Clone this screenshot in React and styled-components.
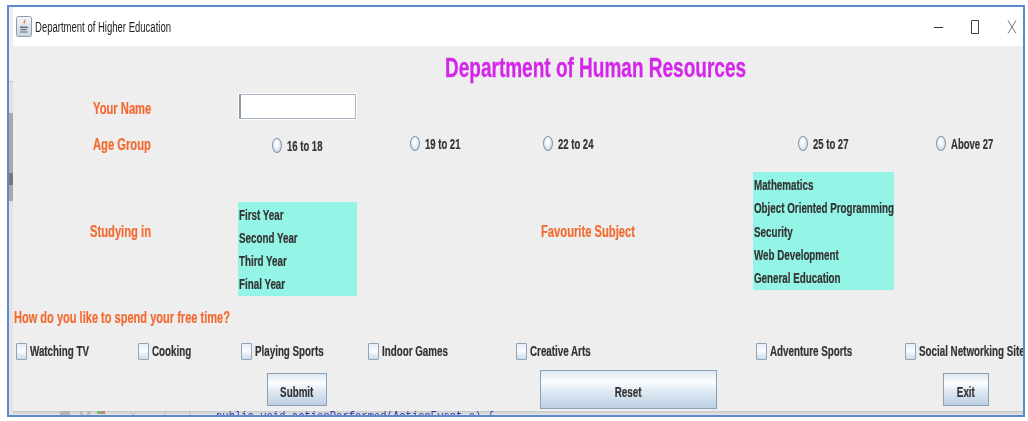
import React from "react";
import styled, { createGlobalStyle } from "styled-components";

const Global = createGlobalStyle`
  html, body { margin: 0; padding: 0; background: #fff; }
  body { font-family: "Liberation Sans", Arial, sans-serif; }
`;

const Page = styled.div`
  width: 1028px;
  height: 421px;
  padding: 5px 0 0 7px;
  box-sizing: border-box;
  overflow: hidden;
  background: #fff;
`;

const Frame = styled.div`
  width: 1018px;
  height: 412px;
  box-sizing: border-box;
  border: 2px solid #5f88cf;
  display: grid;
  grid-template-columns: 4px 1fr;
  overflow: hidden;
`;

const Side = styled.div`
  display: flex;
  flex-direction: column;
`;

const SideBit = styled.div`
  height: ${(p) => p.$h}px;
  flex: ${(p) => (p.$fill ? 1 : "none")};
  background: ${(p) => p.$c};
  border-bottom: ${(p) => (p.$line ? "1px solid #c4c4c4" : "none")};
`;

const Main = styled.div`
  display: flex;
  flex-direction: column;
  min-width: 0;
`;

const TitleBar = styled.div`
  height: 39px;
  background: #fff;
  display: grid;
  grid-template-columns: 19px 1fr 30px 48px 16px;
  align-items: center;
  padding: 0 0 0 3px;
  color: #222;
`;

const Content = styled.div`
  height: 365px;
  background: #eeeeee;
  display: flex;
  flex-direction: column;
`;

const Text = styled.span`
  display: inline-block;
  white-space: nowrap;
  transform: scaleX(${(p) => p.$scale ?? 0.7});
  transform-origin: ${(p) => p.$origin ?? "left"} center;
  filter: blur(0.4px);
`;

const WindowTitle = styled(Text)`
  font-size: 14px;
  color: #222;
`;

const Heading = styled(Text)`
  font-size: 27px;
  font-weight: 700;
  color: #d425ea;
  -webkit-text-stroke: 0.3px #d425ea;
`;

const Label = styled(Text)`
  font-size: 16px;
  font-weight: 700;
  color: #f26a30;
  -webkit-text-stroke: 0.2px #f26a30;
`;

const Item = styled(Text)`
  font-size: 14px;
  font-weight: 700;
  color: #333;
  -webkit-text-stroke: 0.2px #333;
`;

const HeadingRow = styled.div`
  height: 44px;
  padding-left: 432px;
  display: flex;
  align-items: center;
`;

const NameRow = styled.div`
  margin-top: 4px;
  padding-left: 80px;
  height: 25px;
  display: grid;
  grid-template-columns: 146px 117px;
  align-items: center;
`;

const NameLabel = styled.div`
  padding-top: 4px;
`;

const NameInput = styled.input`
  box-sizing: border-box;
  width: 117px;
  height: 25px;
  padding: 0;
  background: #fff;
  border: 1px solid #a9b5c2;
  border-left: 2px solid #8b98a6;
  outline: 1px solid #fff;
  border-radius: 0;
`;

const AgeRow = styled.div`
  margin-top: 13px;
  padding-left: 80px;
  height: 24px;
  display: grid;
  grid-template-columns: 179px 138px 133px 255px 138px auto;
  align-items: center;
`;

const AgeLabel = styled.div`
  padding-top: 1px;
`;

const Choice = styled.label`
  display: flex;
  align-items: center;
  padding-top: ${(p) => (p.$low ? 4 : 0)}px;
  height: 24px;
  box-sizing: border-box;
`;

const Radio = styled.input.attrs({ type: "radio" })`
  appearance: none;
  margin: -2px 5px 0 0;
  width: 10px;
  height: 15px;
  box-sizing: border-box;
  border: 1px solid #8496ad;
  border-radius: 50%;
  background: radial-gradient(ellipse at 45% 35%, #ffffff 15%, #dbe5ef 60%, #a9bdd2 100%);
  flex: none;
`;

const StudyRow = styled.div`
  margin-top: 16px;
  padding-left: 77px;
  height: 124px;
  display: grid;
  grid-template-columns: 148px 119px 184px 212px 141px;
  align-items: start;
`;

const StudyLabel = styled.div`
  padding-top: 51px;
  grid-column: ${(p) => p.$col};
`;

const List = styled.div`
  margin-top: ${(p) => p.$top}px;
  height: ${(p) => p.$h}px;
  box-sizing: border-box;
  background: #94f4e6;
  display: flex;
  flex-direction: column;
  padding: 1px 0 0 1px;
`;

const ListItem = styled.div`
  flex: 1;
  display: flex;
  align-items: center;
`;

const FreeRow = styled.div`
  margin-top: 13px;
  padding-left: 1px;
  height: 18px;
  display: flex;
  align-items: center;
`;

const CheckRow = styled.div`
  margin-top: 12px;
  padding-left: 3px;
  height: 18px;
  display: grid;
  grid-template-columns: 122px 103px 127px 148px 240px 149px auto;
  align-items: center;
`;

const Check = styled.input.attrs({ type: "checkbox" })`
  appearance: none;
  margin: 0 3px 0 0;
  width: 11px;
  height: 17px;
  box-sizing: border-box;
  border: 1px solid #8fa5bc;
  border-radius: 1px;
  background: linear-gradient(#e4edf5, #fbfdff 45%, #cddbe9);
  flex: none;
`;

const ButtonRow = styled.div`
  margin-top: 13px;
  padding-left: 254px;
  height: 39px;
  display: grid;
  grid-template-columns: 273px 403px 46px;
  align-items: center;
`;

const Btn = styled.button`
  width: ${(p) => p.$w}px;
  height: ${(p) => p.$h}px;
  padding: 5px 0 0;
  box-sizing: border-box;
  border: 1px solid #8ea0b3;
  border-radius: 0;
  background: linear-gradient(#dde8f2, #fbfdff 30%, #dfe9f3 55%, #bcd0e4);
  display: flex;
  align-items: center;
  justify-content: center;
`;

const BottomStrip = styled.div`
  height: 4px;
  background: linear-gradient(#c8c8c8, #e6e6e6);
  overflow: hidden;
  display: flex;
  padding-left: 47px;
`;

const CodeLine = styled(Text)`
  font-family: "Liberation Mono", monospace;
  font-size: 13.5px;
  line-height: 12px;
  align-self: flex-start;
  color: #2c3fae;
`;

const JavaIcon = () => (
  <svg width="16" height="21" viewBox="0 0 16 21">
    <defs>
      <linearGradient id="ji" x1="0" y1="0" x2="0" y2="1">
        <stop offset="0" stopColor="#f4f6f8" />
        <stop offset="1" stopColor="#c9d3dd" />
      </linearGradient>
    </defs>
    <rect x="0.5" y="0.5" width="15" height="20" rx="2" fill="url(#ji)" stroke="#8b9bab" />
    <path d="M8.5 3c1 1.5-1.5 2.5-.8 4.2.3.7 1 1.2 1 1.2-.9-1.4 1.6-2.4.4-5.4z" fill="#e2762a" />
    <path d="M4 10.5h7v1.4H4zM4.6 13h5.8v1.2H4.6zM4 15.4h7.4v1.2H4z" fill="#5c6f88" />
    <path d="M11 10.6c1.5 0 1.5 2-.4 2.2" fill="none" stroke="#5c6f88" strokeWidth=".7" />
  </svg>
);

const Minimize = () => (
  <svg width="30" height="16" viewBox="0 0 30 16">
    <path d="M5 8.5h9" stroke="#333" strokeWidth="1" />
  </svg>
);
const Maximize = () => (
  <svg width="48" height="16" viewBox="0 0 48 16">
    <path d="M12.5 1.5h7v13h-7z" fill="none" stroke="#444" strokeWidth="1" />
  </svg>
);
const Close = () => (
  <svg width="16" height="16" viewBox="0 0 16 16">
    <path d="M1 1.5l8 13M9 1.5l-8 13" fill="none" stroke="#777" strokeWidth="1" />
  </svg>
);

const StripMarks = () => (
  <svg width="156" height="4" viewBox="0 0 156 4" style={{ flex: "none" }}>
    <path d="M0 0h10v4H0z" fill="#b4b4b4" />
    <path d="M20 0l3 4M23 0l-3 4M27 0l3 4M30 0l-3 4" stroke="#a4a4a4" strokeWidth="1" />
    <path d="M37 0h5v3h-5z" fill="#7fb56c" />
    <path d="M42 0h3v3h-3z" fill="#c98070" />
    <path d="M70 0l3 4 3-4M105 0v4M130 0v4" stroke="#bcbcbc" strokeWidth="1" fill="none" />
  </svg>
);

const ages = [
  ["16 to 18", true],
  ["19 to 21", false],
  ["22 to 24", false],
  ["25 to 27", false],
  ["Above 27", false],
];
const years = ["First Year", "Second Year", "Third Year", "Final Year"];
const subjects = ["Mathematics", "Object Oriented Programming", "Security", "Web Development", "General Education"];
const hobbies = ["Watching TV", "Cooking", "Playing Sports", "Indoor Games", "Creative Arts", "Adventure Sports", "Social Networking Sites"];

export default function App() {
  return (
    <Page>
      <Global />
      <Frame>
        <Side>
          <SideBit $h={74} $c="#eeeeee" $line />
          <SideBit $h={31} $c="#e2e2e2" />
          <SideBit $h={60} $c="#a9a9a9" />
          <SideBit $h={12} $c="#777777" />
          <SideBit $h={16} $c="#a9a9a9" />
          <SideBit $fill $c="#e4e4e4" />
        </Side>
        <Main>
          <TitleBar>
            <JavaIcon />
            <WindowTitle $scale={0.68}>Department of Higher Education</WindowTitle>
            <Minimize />
            <Maximize />
            <Close />
          </TitleBar>
          <Content>
            <HeadingRow>
              <Heading $scale={0.704}>Department of Human Resources</Heading>
            </HeadingRow>
            <NameRow>
              <NameLabel><Label>Your Name</Label></NameLabel>
              <NameInput />
            </NameRow>
            <AgeRow>
              <AgeLabel><Label>Age Group</Label></AgeLabel>
              {ages.map(([t, low]) => (
                <Choice key={t} $low={low}>
                  <Radio name="age" />
                  <Item $scale={0.68}>{t}</Item>
                </Choice>
              ))}
            </AgeRow>
            <StudyRow>
              <StudyLabel $col={1}><Label>Studying in</Label></StudyLabel>
              <List $top={30} $h={94}>
                {years.map((y) => (
                  <ListItem key={y}><Item>{y}</Item></ListItem>
                ))}
              </List>
              <StudyLabel $col={4}><Label>Favourite Subject</Label></StudyLabel>
              <List $top={0} $h={118}>
                {subjects.map((s) => (
                  <ListItem key={s}><Item>{s}</Item></ListItem>
                ))}
              </List>
            </StudyRow>
            <FreeRow>
              <Label $scale={0.69}>How do you like to spend your free time?</Label>
            </FreeRow>
            <CheckRow>
              {hobbies.map((h) => (
                <Choice key={h}>
                  <Check />
                  <Item>{h}</Item>
                </Choice>
              ))}
            </CheckRow>
            <ButtonRow>
              <div>
                <Btn $w={60} $h={33}><Item $origin="center">Submit</Item></Btn>
              </div>
              <div>
                <Btn $w={177} $h={39}><Item $origin="center">Reset</Item></Btn>
              </div>
              <div>
                <Btn $w={46} $h={33}><Item $origin="center">Exit</Item></Btn>
              </div>
            </ButtonRow>
          </Content>
          <BottomStrip>
            <StripMarks />
            <CodeLine $scale={0.78}>public void actionPerformed(ActionEvent e) {"{"}</CodeLine>
          </BottomStrip>
        </Main>
      </Frame>
    </Page>
  );
}
